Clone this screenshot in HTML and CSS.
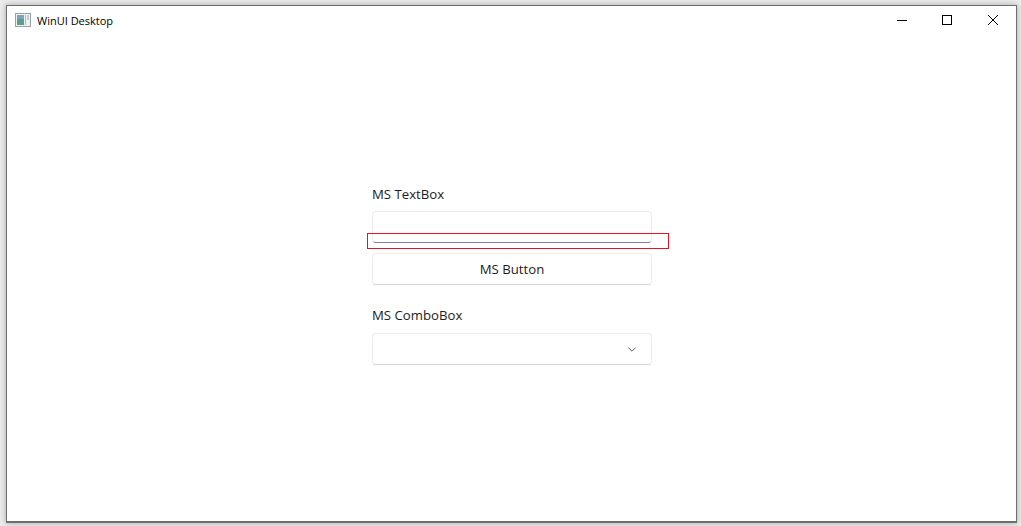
FILE: index.html
```html
<!DOCTYPE html>
<html lang="en">
<head>
  <meta charset="UTF-8" />
  <title>WinUI Desktop</title>
  <link rel="stylesheet" href="styles.css">
</head>
<body>
  <div class="window">
    <div class="titlebar">
      <svg class="appicon" width="16" height="14" viewBox="0 0 16 14">
        <rect x="0.5" y="0.5" width="15" height="13" fill="#eef1f2" stroke="#9aa0a5"/>
        <rect x="2" y="2" width="7" height="10" fill="#5f9c8f"/>
        <rect x="2" y="2" width="7" height="4" fill="#7fa3b8"/>
        <rect x="10" y="2" width="1" height="10" fill="#b4bcc1"/>
        <rect x="12" y="2" width="2" height="5" fill="#c3cfd6"/>
      </svg>
      <span class="title">WinUI Desktop</span>
      <div class="caption">
        <button class="capbtn" aria-label="Minimize">
          <svg width="10" height="10" viewBox="0 0 10 10"><path d="M0 5.5H10" stroke="#000" fill="none"/></svg>
        </button>
        <button class="capbtn" aria-label="Maximize">
          <svg width="10" height="10" viewBox="0 0 10 10"><rect x="0.5" y="0.5" width="9" height="9" stroke="#000" fill="none"/></svg>
        </button>
        <button class="capbtn" aria-label="Close">
          <svg width="10" height="10" viewBox="0 0 10 10"><path d="M0 0L10 10M10 0L0 10" stroke="#000" fill="none"/></svg>
        </button>
      </div>
    </div>

    <div class="content">
      <div class="panel">
        <div class="lbl">MS TextBox</div>
        <div class="textbox">
          <div class="marker"></div>
        </div>
        <button class="btn">MS Button</button>
        <div class="lbl combo-lbl">MS ComboBox</div>
        <div class="combo">
          <svg width="8" height="5" viewBox="0 0 8 5"><path d="M0.4 0.6L4 4.2L7.6 0.6" stroke="#5c5c5c" fill="none"/></svg>
        </div>
      </div>
    </div>
  </div>
</body>
</html>
```

FILE: styles.css
```css
html, body {
  height: 100%;
  margin: 0;
}

body {
  background: #ececec;
  padding: 5px 4px 3px 6px;
  box-sizing: border-box;
  overflow: hidden;
  font-family: "Open Sans", "Liberation Sans", sans-serif;
  color: #1b1b1b;
}

.window {
  height: 100%;
  background: #fff;
  border: 1px solid #6e6e6e;
  border-bottom-width: 2px;
  box-sizing: border-box;
  display: flex;
  flex-direction: column;
  box-shadow: 0 0 6px rgba(0, 0, 0, 0.3);
}

.titlebar {
  display: flex;
  align-items: center;
  height: 28px;
  padding-left: 8px;
}

.appicon {
  margin-right: 6px;
}

.title {
  font-size: 11px;
  color: #000;
  white-space: nowrap;
}

.caption {
  display: flex;
  margin-left: auto;
  margin-right: 0.4px;
}

.capbtn {
  width: 45.5px;
  height: 28px;
  padding: 0;
  border: none;
  background: none;
  display: flex;
  align-items: center;
  justify-content: center;
}

.content {
  flex: 1;
  padding-top: 150px;
  padding-left: 365px;
}

.panel {
  width: 280px;
}

.lbl {
  font-size: 13.2px;
  line-height: 20px;
  height: 20px;
  margin-bottom: 7px;
}

.combo-lbl {
  margin-bottom: 8px;
}

.textbox, .btn, .combo {
  height: 32px;
  box-sizing: border-box;
  background: #fff;
  border: 1px solid #ececec;
  border-radius: 4px;
}

.textbox {
  position: relative;
  border-bottom: 1px solid #868686;
  margin-bottom: 10px;
}

.marker {
  position: absolute;
  left: -6px;
  top: 21px;
  width: 302px;
  height: 16px;
  box-sizing: border-box;
  border: 1px solid #e81123;
}

.btn {
  display: block;
  width: 100%;
  padding: 0;
  border-bottom-color: #d4d4d4;
  font-family: inherit;
  font-size: 13.2px;
  color: #1b1b1b;
  margin-bottom: 20px;
}

.combo {
  display: flex;
  align-items: center;
  justify-content: flex-end;
  padding-right: 15px;
  border-bottom-color: #d4d4d4;
}
```
